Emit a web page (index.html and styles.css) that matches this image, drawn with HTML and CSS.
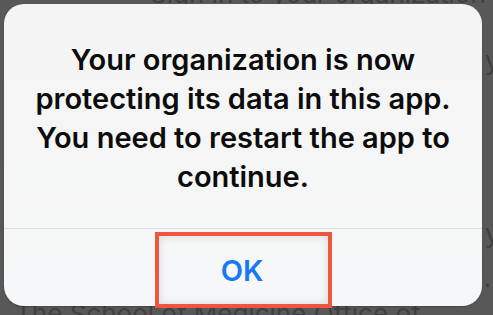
FILE: index.html
```html
<!DOCTYPE html>
<html>
<head>
<meta charset="utf-8">
<link rel="stylesheet" href="styles.css">
</head>
<body>
<div class="backdrop">
  <div class="bg-line bg-top">Sign in to your organization</div>
  <div class="bg-line bg-right1">y</div>
  <div class="bg-line bg-right2">y</div>
  <div class="bg-line bg-right3">…</div>
  <div class="bg-line bg-bottom">The School of Medicine Office of</div>
</div>
<div class="dialog">
  <div class="message">Your organization is now<br>protecting its data in this app.<br>You need to restart the app to<br>continue.</div>
  <div class="actions">
    <div class="ok">OK</div>
  </div>
</div>
<div class="highlight"></div>
</body>
</html>
```
FILE: styles.css
```css
html, body {
  margin: 0;
  padding: 0;
}
body {
  width: 493px;
  height: 315px;
  overflow: hidden;
  background: #585858;
  font-family: Inter, "Noto Sans", sans-serif;
  position: relative;
}
.backdrop {
  position: absolute;
  inset: 0;
  color: #404040;
  font-size: 26px;
}
.bg-line {
  position: absolute;
  white-space: nowrap;
}
.bg-top { left: 150px; top: -22px; }
.bg-right1 { left: 485px; top: 45px; }
.bg-right2 { left: 485px; top: 218px; }
.bg-right3 { left: 484px; top: 262px; }
.bg-bottom { left: 15px; top: 298px; }
.dialog {
  position: relative;
  margin: 4px 0 0 4px;
  width: 478px;
  height: 302px;
  border-radius: 20px;
  background: linear-gradient(#f4f4f4, #f6f7f8);
  display: flex;
  flex-direction: column;
  box-shadow: 0 1px 2px rgba(0,0,0,0.2);
}
.message {
  height: 225px;
  box-sizing: border-box;
  padding: 36px 10px 0;
  text-align: center;
  font-size: 29px;
  font-weight: 600;
  line-height: 39px;
  color: #0c0c0c;
  border-bottom: 1px solid #dcdfe2;
  white-space: nowrap;
}
.actions {
  flex: 1;
  display: flex;
  justify-content: center;
  align-items: center;
}
.ok {
  color: #1877f2;
  font-size: 29px;
  font-weight: 600;
  margin-left: -2px;
  margin-top: 6px;
}
.highlight {
  position: absolute;
  left: 155px;
  top: 232px;
  width: 177px;
  height: 76px;
  box-sizing: border-box;
  border: 4px solid #f0553f;
  box-shadow: inset 0 0 10px rgba(0,0,0,0.12);
}
```
